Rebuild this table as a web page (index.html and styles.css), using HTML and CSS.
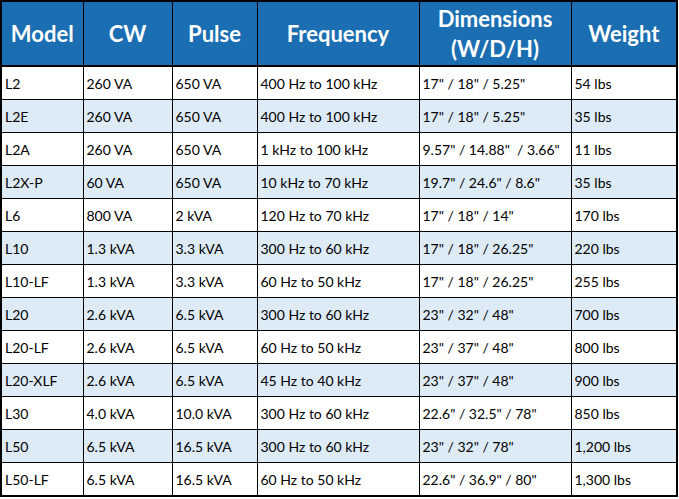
FILE: index.html
```html
<!DOCTYPE html>
<html>
<head>
<meta charset="utf-8">
<link rel="stylesheet" href="styles.css">
</head>
<body>
<table class="spec">
  <colgroup>
    <col class="c1"><col class="c2"><col class="c3"><col class="c4"><col class="c5"><col class="c6">
  </colgroup>
  <thead>
    <tr>
      <th>Model</th><th>CW</th><th>Pulse</th><th>Frequency</th><th>Dimensions<br>(W/D/H)</th><th>Weight</th>
    </tr>
  </thead>
  <tbody>
    <tr><td>L2</td><td>260 VA</td><td>650 VA</td><td>400 Hz to 100 kHz</td><td>17" / 18" / 5.25"</td><td>54 lbs</td></tr>
    <tr><td>L2E</td><td>260 VA</td><td>650 VA</td><td>400 Hz to 100 kHz</td><td>17" / 18" / 5.25"</td><td>35 lbs</td></tr>
    <tr><td>L2A</td><td>260 VA</td><td>650 VA</td><td>1 kHz to 100 kHz</td><td>9.57" / 14.88"&nbsp; / 3.66"</td><td>11 lbs</td></tr>
    <tr><td>L2X-P</td><td>60 VA</td><td>650 VA</td><td>10 kHz to 70 kHz</td><td>19.7" / 24.6" / 8.6"</td><td>35 lbs</td></tr>
    <tr><td>L6</td><td>800 VA</td><td>2 kVA</td><td>120 Hz to 70 kHz</td><td>17" / 18" / 14"</td><td>170 lbs</td></tr>
    <tr><td>L10</td><td>1.3 kVA</td><td>3.3 kVA</td><td>300 Hz to 60 kHz</td><td>17" / 18" / 26.25"</td><td>220 lbs</td></tr>
    <tr><td>L10-LF</td><td>1.3 kVA</td><td>3.3 kVA</td><td>60 Hz to 50 kHz</td><td>17" / 18" / 26.25"</td><td>255 lbs</td></tr>
    <tr><td>L20</td><td>2.6 kVA</td><td>6.5 kVA</td><td>300 Hz to 60 kHz</td><td>23" / 32" / 48"</td><td>700 lbs</td></tr>
    <tr><td>L20-LF</td><td>2.6 kVA</td><td>6.5 kVA</td><td>60 Hz to 50 kHz</td><td>23" / 37" / 48"</td><td>800 lbs</td></tr>
    <tr><td>L20-XLF</td><td>2.6 kVA</td><td>6.5 kVA</td><td>45 Hz to 40 kHz</td><td>23" / 37" / 48"</td><td>900 lbs</td></tr>
    <tr><td>L30</td><td>4.0 kVA</td><td>10.0 kVA</td><td>300 Hz to 60 kHz</td><td>22.6" / 32.5" / 78"</td><td>850 lbs</td></tr>
    <tr><td>L50</td><td>6.5 kVA</td><td>16.5 kVA</td><td>300 Hz to 60 kHz</td><td>23" / 32" / 78"</td><td>1,200 lbs</td></tr>
    <tr><td>L50-LF</td><td>6.5 kVA</td><td>16.5 kVA</td><td>60 Hz to 50 kHz</td><td>22.6" / 36.9" / 80"</td><td>1,300 lbs</td></tr>
  </tbody>
</table>
</body>
</html>
```
FILE: styles.css
```css
html, body {
  margin: 0;
  padding: 0;
  background: #ffffff;
}
.spec {
  border-collapse: collapse;
  table-layout: fixed;
  width: 676px;
  border: 2px solid #000;
  font-family: Lato, "Liberation Sans", sans-serif;
  color: #000;
}
.c1 { width: 82px; }
.c2 { width: 89px; }
.c3 { width: 85px; }
.c4 { width: 162px; }
.c5 { width: 152px; }
.c6 { width: 106px; }
.spec th {
  background: #1b6eb1;
  color: #fff;
  font-weight: 700;
  font-size: 22px;
  line-height: 30px;
  height: 63px;
  padding: 0;
  border: 1px solid #000;
  border-bottom: 2px solid #000;
  text-align: center;
  vertical-align: middle;
}
.spec td {
  font-size: 14px;
  height: 32px;
  padding: 0 3px;
  border: 1px solid #000;
  white-space: nowrap;
  overflow: hidden;
  vertical-align: middle;
}
.spec tbody tr:nth-child(even) td {
  background: #ddebf7;
}
```
